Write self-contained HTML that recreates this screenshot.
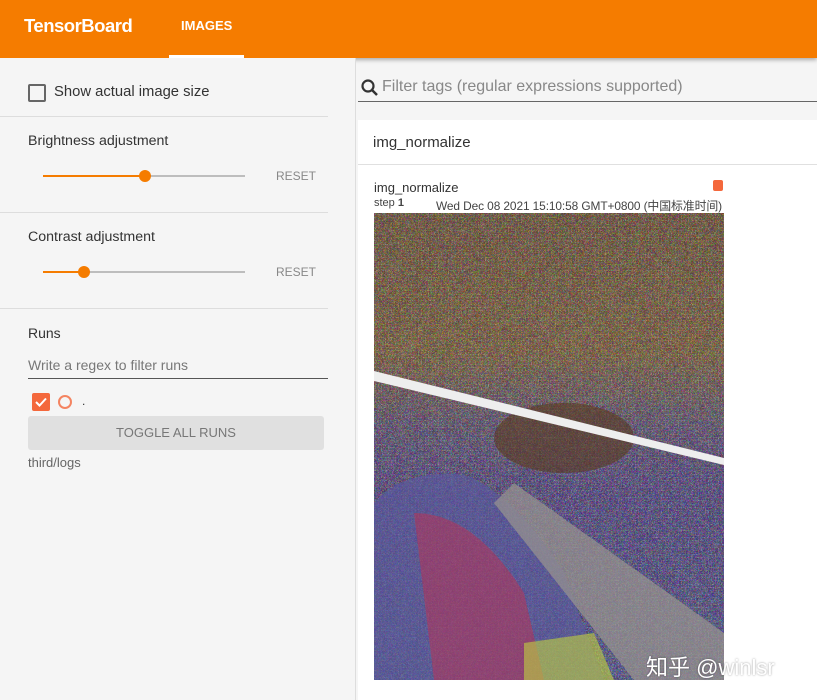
<!DOCTYPE html>
<html><head><meta charset="utf-8"><style>
*{margin:0;padding:0;box-sizing:border-box}
body{width:817px;height:700px;overflow:hidden;background:#f5f5f5;font-family:"Liberation Sans","Noto Sans CJK SC",sans-serif;color:#333;position:relative}
.top{position:absolute;left:0;top:0;width:817px;height:58px;background:#f57c00;box-shadow:0 2px 4px rgba(0,0,0,.3)}
.logo{position:absolute;left:24px;top:15px;color:#fff;font-size:18.5px;font-weight:bold;letter-spacing:-0.5px}
.tab{position:absolute;left:181px;top:18px;color:#fff;font-size:13px;font-weight:bold}
.tabline{position:absolute;left:169px;top:55px;width:75px;height:3px;background:#fff}
.side{position:absolute;left:0;top:58px;width:356px;height:642px;border-right:1px solid #ddd;background:#f5f5f5}
.hr{position:absolute;left:0;width:328px;height:1px;background:#ddd}
.t{position:absolute;font-size:14px;color:#333}
.track{position:absolute;height:2px;background:#bdbdbd}
.fill{position:absolute;height:2px;background:#f57c00}
.knob{position:absolute;width:12px;height:12px;border-radius:50%;background:#f57c00}
.reset{position:absolute;left:276px;font-size:12px;color:#888}
</style></head><body>
<div class="top"><div class="logo">TensorBoard</div><div class="tab">IMAGES</div><div class="tabline"></div></div>
<div class="side">
<div style="position:absolute;left:28px;top:26px;width:18px;height:18px;border:2px solid #666;border-radius:2px"></div>
<div class="t" style="left:54px;top:26px;font-size:14.8px">Show actual image size</div>
<div class="hr" style="top:58px"></div>
<div class="t" style="left:28px;top:75px;font-size:14.2px">Brightness adjustment</div>
<div class="track" style="left:43px;top:117px;width:202px"></div><div class="fill" style="left:43px;top:117px;width:102px"></div><div class="knob" style="left:139px;top:112px"></div>
<div class="reset" style="top:111px">RESET</div>
<div class="hr" style="top:154px"></div>
<div class="t" style="left:28px;top:171px;font-size:14.2px">Contrast adjustment</div>
<div class="track" style="left:43px;top:213px;width:202px"></div><div class="fill" style="left:43px;top:213px;width:41px"></div><div class="knob" style="left:78px;top:208px"></div>
<div class="reset" style="top:207px">RESET</div>
<div class="hr" style="top:250px"></div>
<div class="t" style="left:28px;top:267px">Runs</div>
<div class="t" style="left:28px;top:299px;color:#777">Write a regex to filter runs</div>
<div style="position:absolute;left:28px;top:320px;width:300px;height:1px;background:#555"></div>
<div style="position:absolute;left:32px;top:335px;width:18px;height:18px;background:#f4683c;border-radius:2px"><svg width="18" height="18"><path d="M4 9l3.5 3.5L14 5.5" stroke="#fff" stroke-width="2" fill="none"/></svg></div>
<div style="position:absolute;left:58px;top:337px;width:14px;height:14px;border:2px solid #f4683c;border-radius:50%;opacity:.8"></div>
<div style="position:absolute;left:82px;top:336px;font-size:12px">.</div>
<div style="position:absolute;left:28px;top:358px;width:296px;height:34px;background:#e0e0e0;border-radius:3px;text-align:center;line-height:34px;font-size:13px;color:#777">TOGGLE ALL RUNS</div>
<div class="t" style="left:28px;top:397px;font-size:13px;color:#666">third/logs</div>
</div>
<svg style="position:absolute;left:360px;top:78px" width="20" height="20"><circle cx="8" cy="8" r="5.5" stroke="#333" stroke-width="2.2" fill="none"/><path d="M12 12l5 5" stroke="#333" stroke-width="2.5"/></svg>
<div style="position:absolute;left:382px;top:78px;font-size:16px;color:#888">Filter tags (regular expressions supported)</div>
<div style="position:absolute;left:358px;top:101px;width:459px;height:1px;background:#666"></div>
<div style="position:absolute;left:358px;top:120px;width:459px;height:580px;background:#fff"></div>
<div style="position:absolute;left:358px;top:164px;width:459px;height:1px;background:#e0e0e0"></div>
<div style="position:absolute;left:373px;top:134px;font-size:15px;color:#333">img_normalize</div>
<div style="position:absolute;left:374px;top:180px;font-size:13px;color:#333">img_normalize</div>
<div style="position:absolute;left:713px;top:180px;width:10px;height:11px;background:#f4683c;border-radius:2px"></div>
<div style="position:absolute;left:374px;top:197px;font-size:11px;color:#444">step <b>1</b></div>
<div style="position:absolute;left:436px;top:197px;font-size:11.9px;color:#444;white-space:nowrap;letter-spacing:-0.1px">Wed Dec 08 2021 15:10:58 GMT+0800 (中国标准时间)</div>
<div style="position:absolute;left:374px;top:213px;width:350px;height:467px;overflow:hidden;background:linear-gradient(180deg,#8a6a4a 0%,#9a7850 30%,#7a6a8a 45%,#6a5aa0 60%,#6a6aa8 100%)">
<svg width="350" height="467" style="position:absolute;left:0;top:0">
<defs><filter id="n"><feTurbulence baseFrequency="0.7" numOctaves="2" seed="3"/><feColorMatrix values="1.6 0 0 0 -0.3 0 1.6 0 0 -0.3 0 0 1.6 0 -0.3 0 0 0 0 0.4"/></filter></defs>
<rect width="350" height="467" filter="url(#n)"/>
<ellipse cx="190" cy="225" rx="70" ry="35" fill="#5a3a20" opacity=".6"/>
<path d="M0 290 Q30 255 90 262 Q140 280 190 360 L230 467 L0 467 Z" fill="#5a5aa0" opacity=".6"/>
<path d="M40 300 Q100 300 150 380 L170 467 L60 467 Z" fill="#c03050" opacity=".5"/>
<path d="M150 430 L220 420 L240 467 L150 467 Z" fill="#c0d040" opacity=".6"/>
<path d="M140 270 L350 420 L350 467 L260 467 L120 290 Z" fill="#9a9590" opacity=".7"/>
<path d="M0 158 L350 245 L350 252 L0 168 Z" fill="#eee"/>
</svg></div>
<div style="position:absolute;left:646px;top:650px;font-size:22px;color:#fff;text-shadow:0 0 2px rgba(0,0,0,.4)">知乎 @winlsr</div>
</body></html>
